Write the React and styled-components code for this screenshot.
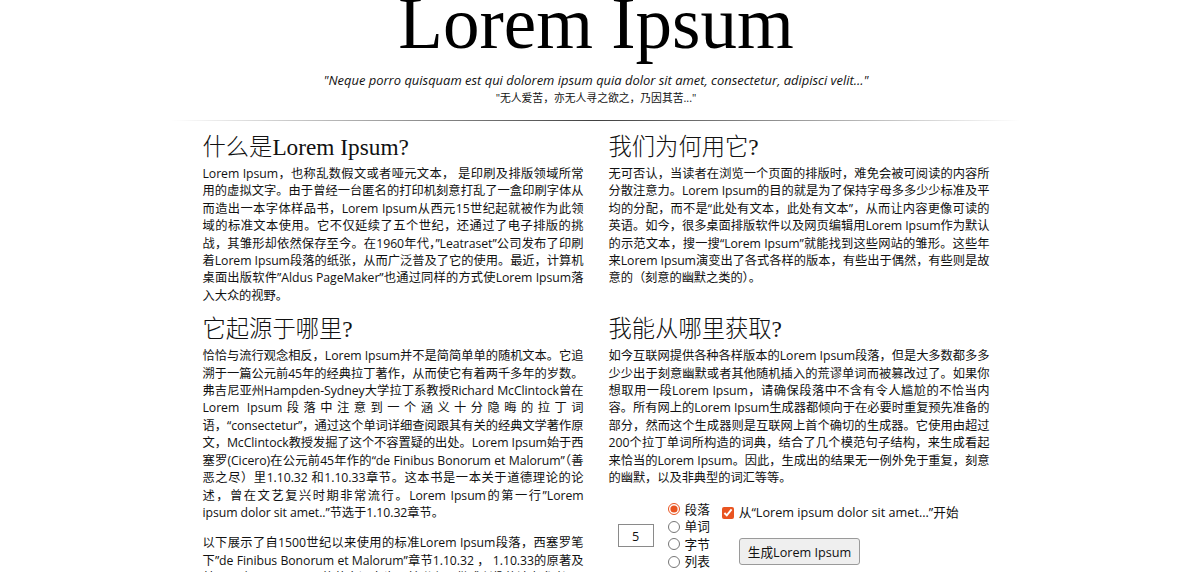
import React from "react";
import styled, { createGlobalStyle } from "styled-components";

const GlobalStyle = createGlobalStyle`
  html, body {
    margin: 0;
    padding: 0;
    background: #fff;
    overflow: hidden;
  }
  body {
    font-family: "Open Sans", "Noto Sans CJK SC", sans-serif;
    color: #111;
  }
`;

const Page = styled.div`
  width: 1192px;
  height: 572px;
  overflow: hidden;
`;

const Banner = styled.header`
  text-align: center;
`;

const Title = styled.h1`
  margin: -13px 0 0;
  font-family: "Liberation Serif", serif;
  font-weight: normal;
  font-size: 73px;
  line-height: 73px;
  color: #000;
`;

const Quote = styled.h4`
  margin: 11px 0 0;
  font-family: "Open Sans", "Noto Sans CJK SC", sans-serif;
  font-style: italic;
  font-weight: normal;
  font-size: 12.95px;
  line-height: 18px;
  color: #111;
`;

const QuoteZh = styled.h5`
  margin: 0;
  font-family: "Open Sans", "Noto Sans CJK SC", sans-serif;
  font-weight: normal;
  font-size: 10.8px;
  line-height: 18px;
  color: #111;
`;

const Rule = styled.hr`
  width: 850px;
  height: 1px;
  margin: 13px auto 0;
  border: 0;
  background-image: linear-gradient(
    to right,
    rgba(0, 0, 0, 0),
    rgba(0, 0, 0, 0.75),
    rgba(0, 0, 0, 0)
  );
`;

const Panes = styled.main`
  width: 787px;
  margin: 12px auto 0;
  display: grid;
  grid-template-columns: 381px 381px;
  column-gap: 25px;
  row-gap: 11px;
`;

const Box = styled.section`
  display: flex;
  flex-direction: column;
`;

const Heading = styled.h2`
  margin: 0 0 4px;
  font-family: "Liberation Serif", "Noto Sans CJK SC", serif;
  font-weight: 300;
  font-size: 23.3px;
  line-height: 28px;
  color: #111;
`;

const Para = styled.p`
  margin: 0 0 13px;
  font-size: 12.25px;
  line-height: 17.4px;
  letter-spacing: -0.06px;
  text-align: justify;
  &:last-of-type {
    margin-bottom: 0;
  }
`;

const Generator = styled.form`
  display: flex;
  align-items: flex-start;
  padding: 14px 0 0 9px;
  font-size: 12.65px;
  line-height: 17.5px;
`;

const AmountCell = styled.div`
  align-self: center;
  margin-right: 14px;
`;

const Amount = styled.input`
  box-sizing: border-box;
  width: 36px;
  height: 23px;
  padding: 0;
  border: 1px solid #8a8a8a;
  border-radius: 0;
  text-align: center;
  font-family: "Open Sans", sans-serif;
  font-size: 12.65px;
  color: #111;
`;

const Choices = styled.div`
  display: flex;
  flex-direction: column;
  margin-right: 12px;
`;

const Choice = styled.label`
  display: flex;
  align-items: center;
  gap: 5px;
  height: 17.5px;
`;

const Radio = styled.input`
  width: 12px;
  height: 12px;
  margin: 0;
  accent-color: #e95420;
`;

const Options = styled.div`
  display: flex;
  flex-direction: column;
  align-items: flex-start;
  padding-top: 2px;
`;

const Check = styled.label`
  display: flex;
  align-items: center;
  gap: 5px;
  height: 20px;
`;

const CheckBox = styled.input`
  width: 12px;
  height: 12px;
  margin: 0;
  accent-color: #e95420;
`;

const Submit = styled.button`
  margin: 15px 0 0 17px;
  height: 27px;
  padding: 0 8px;
  border: 1px solid #9a9a9a;
  border-radius: 3px;
  background: #efefef;
  font-family: "Open Sans", "Noto Sans CJK SC", sans-serif;
  font-size: 12.65px;
  color: #111;
`;

const sections = [
  {
    title: "什么是Lorem Ipsum?",
    paras: [
      "Lorem Ipsum，也称乱数假文或者哑元文本， 是印刷及排版领域所常用的虚拟文字。由于曾经一台匿名的打印机刻意打乱了一盒印刷字体从而造出一本字体样品书，Lorem Ipsum从西元15世纪起就被作为此领域的标准文本使用。它不仅延续了五个世纪，还通过了电子排版的挑战，其雏形却依然保存至今。在1960年代，”Leatraset”公司发布了印刷着Lorem Ipsum段落的纸张，从而广泛普及了它的使用。最近，计算机桌面出版软件”Aldus PageMaker”也通过同样的方式使Lorem Ipsum落入大众的视野。",
    ],
  },
  {
    title: "我们为何用它?",
    paras: [
      "无可否认，当读者在浏览一个页面的排版时，难免会被可阅读的内容所分散注意力。Lorem Ipsum的目的就是为了保持字母多多少少标准及平均的分配，而不是“此处有文本，此处有文本”，从而让内容更像可读的英语。如今，很多桌面排版软件以及网页编辑用Lorem Ipsum作为默认的示范文本，搜一搜“Lorem Ipsum”就能找到这些网站的雏形。这些年来Lorem Ipsum演变出了各式各样的版本，有些出于偶然，有些则是故意的（刻意的幽默之类的）。",
    ],
  },
  {
    title: "它起源于哪里?",
    paras: [
      "恰恰与流行观念相反，Lorem Ipsum并不是简简单单的随机文本。它追溯于一篇公元前45年的经典拉丁著作，从而使它有着两千多年的岁数。弗吉尼亚州Hampden-Sydney大学拉丁系教授Richard McClintock曾在Lorem Ipsum段落中注意到一个涵义十分隐晦的拉丁词语，“consectetur”，通过这个单词详细查阅跟其有关的经典文学著作原文，McClintock教授发掘了这个不容置疑的出处。Lorem Ipsum始于西塞罗(Cicero)在公元前45年作的“de Finibus Bonorum et Malorum”（善恶之尽）里1.10.32 和1.10.33章节。这本书是一本关于道德理论的论述，曾在文艺复兴时期非常流行。Lorem Ipsum的第一行”Lorem ipsum dolor sit amet..”节选于1.10.32章节。",
      "以下展示了自1500世纪以来使用的标准Lorem Ipsum段落，西塞罗笔下”de Finibus Bonorum et Malorum”章节1.10.32 ， 1.10.33的原著及其1914年H. Rackham的英文译本也一并附上，供感兴趣的读者参考。",
    ],
  },
  {
    title: "我能从哪里获取?",
    paras: [
      "如今互联网提供各种各样版本的Lorem Ipsum段落，但是大多数都多多少少出于刻意幽默或者其他随机插入的荒谬单词而被篡改过了。如果你想取用一段Lorem Ipsum，请确保段落中不含有令人尴尬的不恰当内容。所有网上的Lorem Ipsum生成器都倾向于在必要时重复预先准备的部分，然而这个生成器则是互联网上首个确切的生成器。它使用由超过200个拉丁单词所构造的词典，结合了几个模范句子结构，来生成看起来恰当的Lorem Ipsum。因此，生成出的结果无一例外免于重复，刻意的幽默，以及非典型的词汇等等。",
    ],
    generator: true,
  },
];

const kinds = ["段落", "单词", "字节", "列表"];

function LipsumGenerator() {
  return (
    <Generator onSubmit={(e) => e.preventDefault()}>
      <AmountCell>
        <Amount type="text" defaultValue="5" aria-label="数量" />
      </AmountCell>
      <Choices>
        {kinds.map((k, i) => (
          <Choice key={k}>
            <Radio type="radio" name="what" defaultChecked={i === 0} />
            {k}
          </Choice>
        ))}
      </Choices>
      <Options>
        <Check>
          <CheckBox type="checkbox" defaultChecked />
          从“Lorem ipsum dolor sit amet...”开始
        </Check>
        <Submit type="submit">生成Lorem Ipsum</Submit>
      </Options>
    </Generator>
  );
}

export default function App() {
  return (
    <Page>
      <GlobalStyle />
      <Banner>
        <Title>Lorem Ipsum</Title>
        <Quote>
          "Neque porro quisquam est qui dolorem ipsum quia dolor sit amet,
          consectetur, adipisci velit..."
        </Quote>
        <QuoteZh>"无人爱苦，亦无人寻之欲之，乃因其苦..."</QuoteZh>
      </Banner>
      <Rule />
      <Panes>
        {sections.map((s) => (
          <Box key={s.title}>
            <Heading>{s.title}</Heading>
            {s.paras.map((p, i) => (
              <Para key={i}>{p}</Para>
            ))}
            {s.generator && <LipsumGenerator />}
          </Box>
        ))}
      </Panes>
    </Page>
  );
}
